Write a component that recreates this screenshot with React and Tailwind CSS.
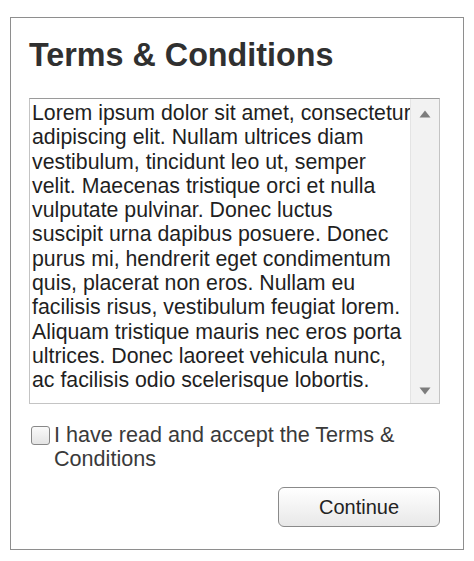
import React from "react";

const TERMS_LINES = [
  "Lorem ipsum dolor sit amet, consectetur",
  "adipiscing elit. Nullam ultrices diam",
  "vestibulum, tincidunt leo ut, semper",
  "velit. Maecenas tristique orci et nulla",
  "vulputate pulvinar. Donec luctus",
  "suscipit urna dapibus posuere. Donec",
  "purus mi, hendrerit eget condimentum",
  "quis, placerat non eros. Nullam eu",
  "facilisis risus, vestibulum feugiat lorem.",
  "Aliquam tristique mauris nec eros porta",
  "ultrices. Donec laoreet vehicula nunc,",
  "ac facilisis odio scelerisque lobortis.",
];

function Arrow({ up }) {
  return (
    <svg width="12" height="8" viewBox="0 0 12 8" className="block">
      {up ? (
        <polygon points="6,0.5 11.5,7.5 0.5,7.5" fill="#7d7d7d" />
      ) : (
        <polygon points="0.5,0.5 11.5,0.5 6,7.5" fill="#7d7d7d" />
      )}
    </svg>
  );
}

export default function App() {
  return (
    <div className="w-[474px] h-[561px] bg-white pt-[17px] pl-[10px] font-['Liberation_Sans',Arial,sans-serif]">
      <div className="w-[454px] h-[533px] border border-[#8e8e8e] pl-[18px] pt-[21px] flex flex-col">
        <h1 className="text-[32.3px] leading-[32px] font-bold text-[#303030] whitespace-nowrap">
          Terms &amp; Conditions
        </h1>

        <div className="mt-[27px] w-[411px] h-[306px] border border-[#c4c4c4] border-t-[#9a9a9a] flex bg-white">
          <div className="flex-1 pl-[2px] pt-[2px] text-[21.3px] leading-[24.3px] text-[#1f1f1f] overflow-hidden">
            {TERMS_LINES.map((line) => (
              <div key={line} className="whitespace-nowrap">
                {line}
              </div>
            ))}
          </div>
          <div className="w-[29px] bg-[#f2f2f2] border-l border-[#e4e4e4] flex flex-col items-center justify-between pt-[11px] pb-[8px]">
            <Arrow up />
            <Arrow />
          </div>
        </div>

        <label className="mt-[19px] w-[411px] flex items-start text-[21.6px] leading-[24px] text-[#3a3a3a]">
          <span className="ml-[2px] mt-[3px] w-[19px] h-[19px] shrink-0 rounded-[3px] border border-[#888888] bg-gradient-to-b from-[#fafafa] to-[#e4e4e4]" />
          <span className="ml-[4px] whitespace-nowrap">
            I have read and accept the Terms &amp;
            <br />
            Conditions
          </span>
        </label>

        <div className="mt-[16px] w-[411px] flex justify-end">
          <button className="w-[162px] h-[40px] rounded-[6px] border border-[#8a8a8a] bg-gradient-to-b from-[#ffffff] to-[#e8e8e8] text-[20px] text-[#222222] font-['Liberation_Sans',Arial,sans-serif]">
            Continue
          </button>
        </div>
      </div>
    </div>
  );
}
